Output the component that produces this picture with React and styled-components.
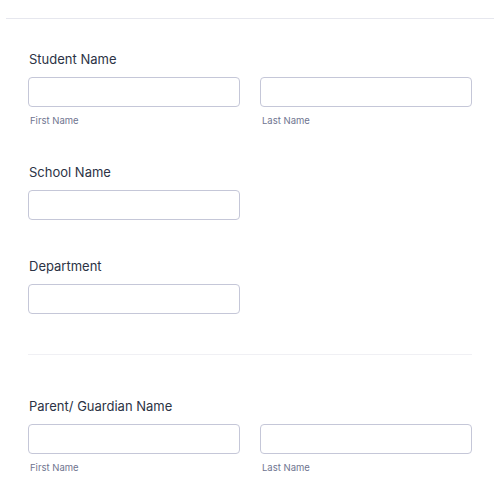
import React from "react";
import styled, { createGlobalStyle } from "styled-components";

const GlobalStyle = createGlobalStyle`
  html, body {
    margin: 0;
    padding: 0;
    background: #ffffff;
  }
  body {
    font-family: Inter, "Noto Sans", "Liberation Sans", sans-serif;
    -webkit-font-smoothing: antialiased;
  }
`;

const Page = styled.div`
  width: 500px;
  height: 484px;
  overflow: hidden;
  padding: 18px 6px 0;
  box-sizing: border-box;
`;

const TopRule = styled.div`
  height: 1px;
  background: #e6e7ee;
`;

const FormList = styled.ul`
  list-style: none;
  margin: 12px 0 0;
  padding: 0 22px;
`;

const Field = styled.li`
  padding: 18px 0;
`;

const Label = styled.label`
  display: block;
  font-size: 13px;
  line-height: 18px;
  font-weight: 400;
  color: #2c3345;
  padding: 1px 0 0 1px;
  margin-bottom: 9px;
`;

const Row = styled.div`
  display: grid;
  grid-template-columns: 1fr 1fr;
  column-gap: 20px;
`;

const Cell = styled.div`
  display: flex;
  flex-direction: column;
`;

const Input = styled.input`
  box-sizing: border-box;
  height: 30px;
  width: ${(p) => (p.$half ? "calc(50% - 10px)" : "100%")};
  border: 1px solid #c5c7d8;
  border-radius: 4px;
  background: #fff;
  padding: 0 8px;
  font: inherit;
  font-size: 13px;
  outline: none;
`;

const SubLabel = styled.span`
  font-size: 9.5px;
  line-height: 11px;
  color: #6f7590;
  margin-top: 8px;
  padding-left: 2px;
`;

const Divider = styled.li`
  height: 1px;
  background: #f0f0f4;
  margin: 22px 0 23px;
`;

function NameField({ label }) {
  return (
    <Field>
      <Label>{label}</Label>
      <Row>
        <Cell>
          <Input type="text" />
          <SubLabel>First Name</SubLabel>
        </Cell>
        <Cell>
          <Input type="text" />
          <SubLabel>Last Name</SubLabel>
        </Cell>
      </Row>
    </Field>
  );
}

function TextField({ label }) {
  return (
    <Field>
      <Label>{label}</Label>
      <Input type="text" $half />
    </Field>
  );
}

export default function App() {
  return (
    <Page>
      <GlobalStyle />
      <TopRule />
      <FormList>
        <NameField label="Student Name" />
        <TextField label="School Name" />
        <TextField label="Department" />
        <Divider />
        <NameField label="Parent/ Guardian Name" />
      </FormList>
    </Page>
  );
}
